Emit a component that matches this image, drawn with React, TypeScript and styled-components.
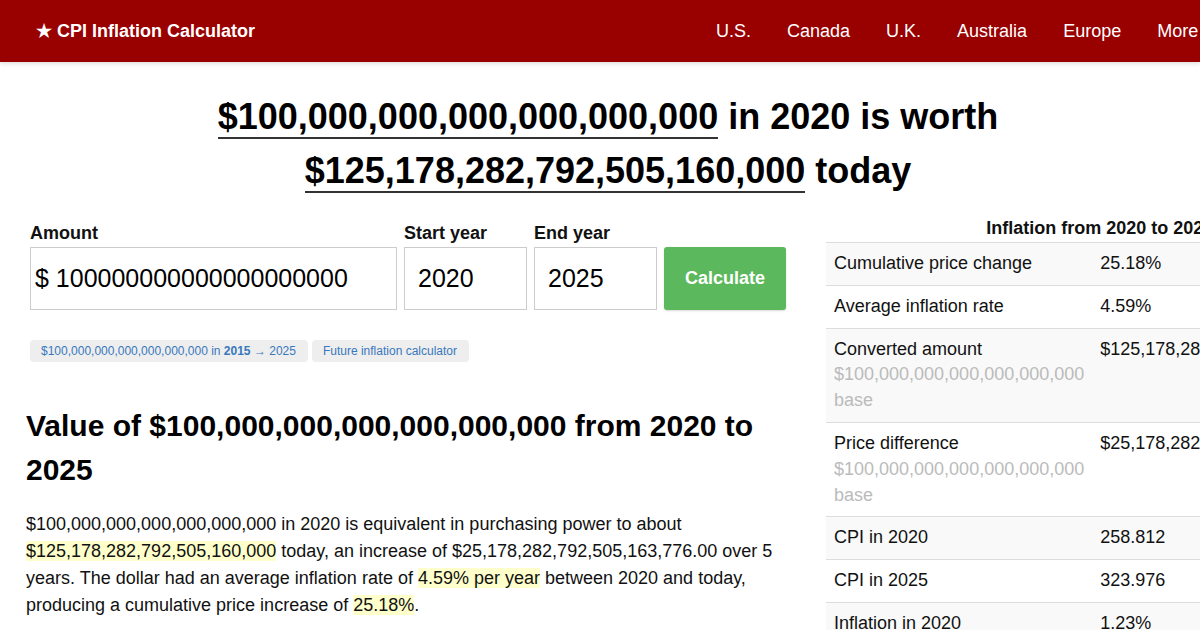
import styled, { createGlobalStyle } from 'styled-components';

const Global = createGlobalStyle`
	html, body {
		margin: 0;
		padding: 0;
		background: #fff;
		overflow: hidden;
	}
	body {
		font-family: "Liberation Sans", Arial, sans-serif;
		color: #111;
		width: 1200px;
	}
`;

const Header = styled.header`
	height: 62px;
	background: #990000;
	box-shadow: 0 2px 4px rgba(0, 0, 0, 0.12);
	display: flex;
	align-items: center;
	padding-left: 36px;
	white-space: nowrap;
	overflow: hidden;
`;

const Brand = styled.a`
	width: 662px;
	flex: none;
	color: #fff;
	font-weight: bold;
	font-size: 18px;
	text-decoration: none;
`;

const Nav = styled.nav`
	display: flex;
	flex: none;
`;

const NavLink = styled.a`
	padding: 0 18px;
	color: #fff;
	font-size: 18px;
	text-decoration: none;
`;

const Title = styled.h1`
	margin: 28px 0 0;
	padding-left: 16px;
	text-align: center;
	font-size: 36px;
	line-height: 54px;
	font-weight: bold;
	color: #000;
`;

const Amount = styled.span`
	border-bottom: 2px solid #333;
`;

const Columns = styled.div`
	display: flex;
	gap: 30px;
	margin-top: 16px;
	padding-left: 26px;
	white-space: nowrap;
`;

const Left = styled.div`
	width: 770px;
	flex: none;
	white-space: normal;
`;

const Form = styled.form`
	display: flex;
	align-items: flex-end;
	gap: 7px;
	padding: 9px 0 0 4px;
`;

const Field = styled.label`
	display: flex;
	flex-direction: column;
	gap: 4px;
`;

const Label = styled.span`
	font-weight: bold;
	font-size: 18px;
	line-height: 20px;
	color: #111;
`;

const Input = styled.input<{ $w: number; $pad: number }>`
	box-sizing: border-box;
	width: ${p => p.$w}px;
	height: 63px;
	border: 1px solid #ccc;
	border-radius: 0;
	padding: 0 0 0 ${p => p.$pad}px;
	font-family: "Liberation Sans", Arial, sans-serif;
	font-size: 25px;
	color: #000;
	outline: none;
`;

const Button = styled.button`
	width: 122px;
	height: 63px;
	border: none;
	border-radius: 3px;
	background: #5cb85c;
	box-shadow: 0 1px 2px rgba(0, 0, 0, 0.15);
	color: #fff;
	font-family: "Liberation Sans", Arial, sans-serif;
	font-weight: bold;
	font-size: 18px;
`;

const Chips = styled.div`
	display: flex;
	gap: 4px;
	margin: 30px 0 0 4px;
`;

const Chip = styled.a`
	display: inline-block;
	height: 22px;
	line-height: 22px;
	padding: 0 12px 0 11px;
	background: #eee;
	border-radius: 4px;
	font-size: 12px;
	color: #3878bd;
	text-decoration: none;
`;

const Heading2 = styled.h2`
	margin: 42px 0 0;
	font-size: 30px;
	line-height: 44px;
	font-weight: bold;
	color: #000;
`;

const Para = styled.p`
	margin: 19px 0 0;
	font-size: 18px;
	line-height: 27px;
	color: #111;
`;

const Mark = styled.span`
	background: #ffffcc;
`;

const Right = styled.div`
	flex: none;
`;

const Table = styled.table`
	border-collapse: collapse;
	font-size: 18px;
	line-height: 25.8px;
	color: #111;
`;

const Caption = styled.caption`
	font-weight: bold;
	font-size: 18px;
	line-height: 28px;
	color: #111;
`;

const Row = styled.tr<{ $shade: boolean }>`
	background: ${p => (p.$shade ? '#f9f9f9' : '#fff')};
	border-top: 1px solid #ddd;
`;

const Cell = styled.td`
	padding: 8px;
	vertical-align: top;
	white-space: normal;
	&:first-child {
		width: 250px;
	}
`;

const Sub = styled.span`
	display: block;
	color: #bbb;
`;

const rows: { label: string; value: string; sub?: boolean }[] = [
  { label: 'Cumulative price change', value: '25.18%' },
  { label: 'Average inflation rate', value: '4.59%' },
  { label: 'Converted amount', value: '$125,178,282,792,505,160,000', sub: true },
  { label: 'Price difference', value: '$25,178,282,792,505,163,776.00', sub: true },
  { label: 'CPI in 2020', value: '258.812' },
  { label: 'CPI in 2025', value: '323.976' },
  { label: 'Inflation in 2020', value: '1.23%' },
  { label: 'Inflation in 2025', value: '2.95%' },
];

const navItems = ['U.S.', 'Canada', 'U.K.', 'Australia', 'Europe', 'More'];

export default function App() {
  return (
    <>
      <Global />
      <Header>
        <Brand href="#">★ CPI Inflation Calculator</Brand>
        <Nav>
          {navItems.map(n => (
            <NavLink key={n} href="#">{n}</NavLink>
          ))}
        </Nav>
      </Header>
      <Title>
        <Amount>$100,000,000,000,000,000,000</Amount> in 2020 is worth
        <br />
        <Amount>$125,178,282,792,505,160,000</Amount> today
      </Title>
      <Columns>
        <Left>
          <Form onSubmit={e => e.preventDefault()}>
            <Field>
              <Label>Amount</Label>
              <Input $w={367} $pad={4} defaultValue="$ 100000000000000000000" />
            </Field>
            <Field>
              <Label>Start year</Label>
              <Input $w={123} $pad={13} defaultValue="2020" />
            </Field>
            <Field>
              <Label>End year</Label>
              <Input $w={123} $pad={13} defaultValue="2025" />
            </Field>
            <Button type="submit">Calculate</Button>
          </Form>
          <Chips>
            <Chip href="#">$100,000,000,000,000,000,000 in <b>2015</b> → 2025</Chip>
            <Chip href="#">Future inflation calculator</Chip>
          </Chips>
          <Heading2>Value of $100,000,000,000,000,000,000 from 2020 to 2025</Heading2>
          <Para>
            $100,000,000,000,000,000,000 in 2020 is equivalent in purchasing power to about{' '}
            <Mark>$125,178,282,792,505,160,000</Mark> today, an increase of
            $25,178,282,792,505,163,776.00 over 5 years. The dollar had an average inflation rate
            of <Mark>4.59% per year</Mark> between 2020 and today, producing a cumulative price
            increase of <Mark>25.18%</Mark>.
          </Para>
        </Left>
        <Right>
          <Table>
            <Caption>Inflation from 2020 to 2025</Caption>
            <tbody>
              {rows.map((r, i) => (
                <Row key={r.label} $shade={i % 2 === 0}>
                  <Cell>
                    {r.label}
                    {r.sub && <Sub>$100,000,000,000,000,000,000 base</Sub>}
                  </Cell>
                  <Cell>{r.value}</Cell>
                </Row>
              ))}
            </tbody>
          </Table>
        </Right>
      </Columns>
    </>
  );
}
